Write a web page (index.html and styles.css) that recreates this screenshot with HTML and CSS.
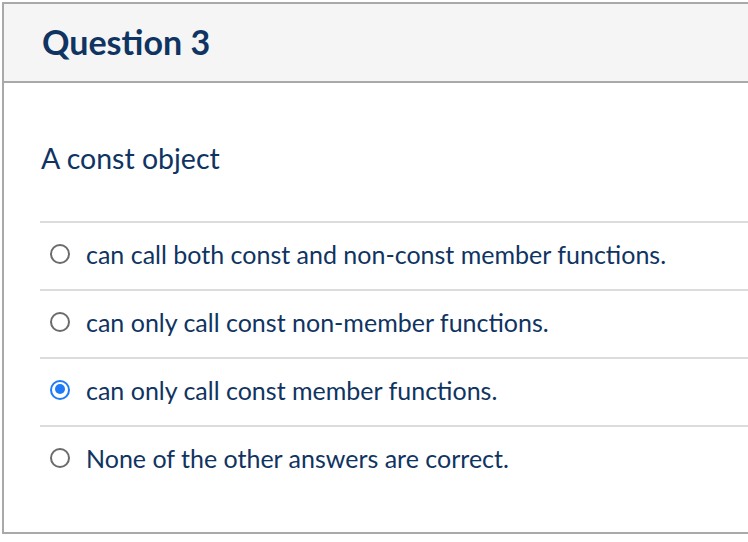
FILE: index.html
```html
<!DOCTYPE html>
<html>
<head>
<meta charset="utf-8">
<link rel="stylesheet" href="styles.css">
</head>
<body>
<div class="card">
  <div class="header">
    <h2 class="title">Question 3</h2>
  </div>
  <div class="body">
    <p class="prompt">A const object</p>
    <div class="answers">
      <label class="answer"><span class="radio"></span><span class="text">can call both const and non-const member functions.</span></label>
      <label class="answer"><span class="radio"></span><span class="text">can only call const non-member functions.</span></label>
      <label class="answer"><span class="radio checked"></span><span class="text">can only call const member functions.</span></label>
      <label class="answer"><span class="radio"></span><span class="text">None of the other answers are correct.</span></label>
    </div>
  </div>
</div>
</body>
</html>
```
FILE: styles.css
```css
html, body {
  margin: 0;
  padding: 0;
  background: #fff;
}
body {
  font-family: Lato, "Liberation Sans", sans-serif;
  color: #0f3462;
  overflow: hidden;
}
.card {
  margin: 2px 0 0 2px;
  border: 2px solid #a9a9a9;
  border-right: none;
  height: 532px;
  box-sizing: border-box;
  display: flex;
  flex-direction: column;
}
.header {
  background: #f5f5f5;
  height: 79px;
  box-sizing: border-box;
  border-bottom: 2px solid #a9a9a9;
  padding-left: 38px;
  display: flex;
  align-items: center;
}
.title {
  margin: 0 0 2px;
  font-size: 34px;
  font-weight: 700;
  letter-spacing: 0;
}
.body {
  padding-left: 36px;
}
.prompt {
  margin: 55px 0 0 1px;
  font-size: 28.5px;
  line-height: 40px;
}
.answers {
  margin-top: 43px;
}
.answer {
  display: flex;
  align-items: center;
  height: 68px;
  border-top: 2px solid #dcdcdc;
  box-sizing: border-box;
  padding: 0 0 5px 10px;
  font-size: 25px;
}
.radio {
  width: 20px;
  height: 20px;
  border: 2px solid #6b6b6b;
  border-radius: 50%;
  box-sizing: border-box;
  margin-right: 16px;
  flex: none;
  position: relative;
}
.radio.checked {
  border: 2.5px solid #1f7af7;
  background: #fff;
}
.radio.checked::after {
  content: "";
  position: absolute;
  left: 2.5px;
  top: 2.5px;
  width: 10px;
  height: 10px;
  border-radius: 50%;
  background: #1f7af7;
}
```
